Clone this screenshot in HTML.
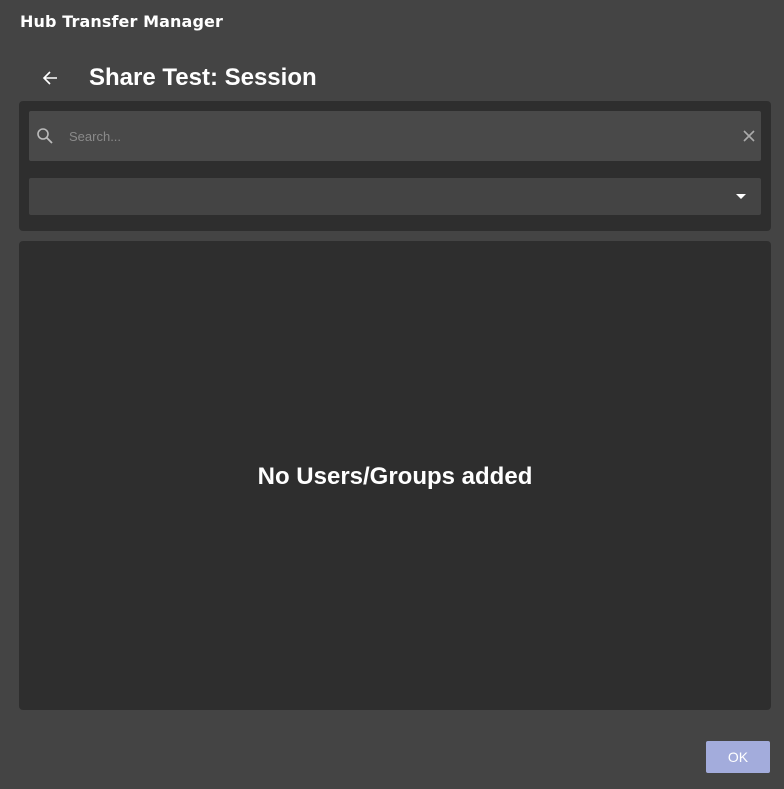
<!DOCTYPE html>
<html><head><style>
body{margin:0;width:784px;height:789px;background:#444;font-family:"Liberation Sans","DejaVu Sans",sans-serif;position:relative;overflow:hidden}
.abs{position:absolute}
</style></head><body>
<div class="abs" style="left:20px;top:12px;font-size:16px;font-weight:bold;color:#fff;font-family:'DejaVu Sans',sans-serif;letter-spacing:0.1px">Hub Transfer Manager</div>
<svg class="abs" style="left:40px;top:68px" width="20" height="20" viewBox="0 0 20 20"><path d="M17 10H4M10 4L4 10L10 16" stroke="#fff" stroke-width="1.6" fill="none"/></svg>
<div class="abs" style="left:89px;top:64px;font-size:24px;font-weight:bold;color:#fff">Share Test: Session</div>
<div class="abs" style="left:19px;top:101px;width:752px;height:130px;background:#2e2e2e;border-radius:4px"></div>
<div class="abs" style="left:29px;top:111px;width:732px;height:50px;background:#494949;border-radius:2px"></div>
<svg class="abs" style="left:36px;top:127px" width="18" height="18" viewBox="0 0 18 18"><circle cx="7" cy="7" r="5" stroke="#bbb" stroke-width="1.6" fill="none"/><path d="M10.5 10.5L16 16" stroke="#bbb" stroke-width="1.8"/></svg>
<div class="abs" style="left:69px;top:129px;font-size:13px;color:#8a8a8a">Search...</div>
<svg class="abs" style="left:743px;top:130px" width="12" height="12" viewBox="0 0 12 12"><path d="M1 1L11 11M11 1L1 11" stroke="#aaa" stroke-width="1.6"/></svg>
<div class="abs" style="left:29px;top:178px;width:732px;height:37px;background:#444;border-radius:2px"></div>
<svg class="abs" style="left:736px;top:194px" width="10" height="6" viewBox="0 0 10 6"><path d="M0 0H10L5 5Z" fill="#fff"/></svg>
<div class="abs" style="left:19px;top:241px;width:752px;height:469px;background:#2e2e2e;border-radius:4px"></div>
<div class="abs" style="left:19px;top:463px;width:752px;text-align:center;font-size:24px;font-weight:bold;color:#fff">No Users/Groups added</div>
<div class="abs" style="left:706px;top:741px;width:64px;height:32px;background:#a3acdc;border-radius:2px;color:#fff;font-size:14px;line-height:32px;text-align:center">OK</div>
</body></html>
